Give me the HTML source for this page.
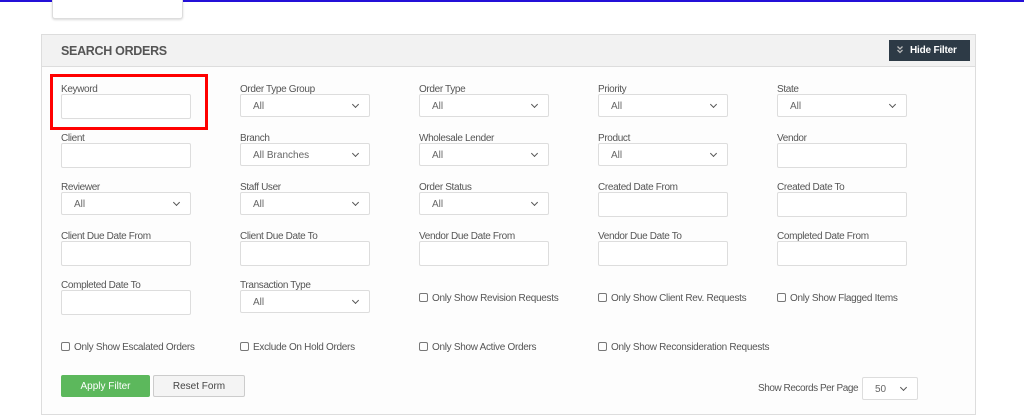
<!DOCTYPE html>
<html><head><style>
*{box-sizing:border-box;margin:0;padding:0}
body{width:1024px;height:416px;background:#fff;font-family:"Liberation Sans",sans-serif;position:relative;overflow:hidden;color:#555}
.a{position:absolute}
.lbl{position:absolute;font-size:10px;color:#555;letter-spacing:-0.35px}
.in{position:absolute;width:130px;height:25px;border:1px solid #ddd;border-radius:2px;background:#fff}
.sel{position:absolute;width:130px;height:23px;border:1px solid #ddd;border-radius:2px;background:#fff;font-size:10px;color:#666;padding:6px 0 0 12px}
.sel:after{content:"";position:absolute;right:11px;top:7px;width:4px;height:4px;border-right:1.5px solid #555;border-bottom:1.5px solid #555;transform:rotate(45deg)}
.cb{position:absolute;font-size:10px;color:#555;letter-spacing:-0.3px}
.cb i{display:inline-block;width:9px;height:9px;border:1px solid #777;border-radius:2px;vertical-align:-1px;margin-right:4px}
</style></head><body>
<div class="a" style="left:0;top:0;width:1024px;height:2px;background:#2410d8"></div>
<div class="a" style="left:52px;top:0;width:131px;height:19px;background:#fff;border:1px solid #ddd;border-top:none;border-radius:0 0 3px 3px;box-shadow:0 1px 2px rgba(0,0,0,.15)"></div>
<div class="a" style="left:41px;top:34px;width:935px;height:381px;border:1px solid #ddd;background:#fdfdfd"></div>
<div class="a" style="left:42px;top:35px;width:933px;height:32px;background:#f2f2f2;border-bottom:1px solid #ddd"></div>
<div class="a" style="left:61px;top:44px;font-size:12.5px;font-weight:bold;color:#555;letter-spacing:-0.3px">SEARCH ORDERS</div>
<div class="a" style="left:889px;top:40px;width:81px;height:21px;background:#2d3a46;color:#fff;font-size:10px;font-weight:bold;padding:5px 0 0 21px;letter-spacing:-0.2px">Hide Filter</div>
<svg class="a" style="left:897px;top:46px" width="6" height="8" viewBox="0 0 6 8"><path d="M0.5 0.5L3 3L5.5 0.5M0.5 4L3 6.5L5.5 4" fill="none" stroke="#bbb" stroke-width="1.3"/></svg>
<div class="a" style="left:50px;top:74px;width:158px;height:56px;border:3px solid #f00"></div>

<div class="lbl" style="left:61px;top:84px">Keyword</div><div class="in" style="left:61px;top:94px"></div>
<div class="lbl" style="left:240px;top:84px">Order Type Group</div><div class="sel" style="left:240px;top:94px">All</div>
<div class="lbl" style="left:419px;top:84px">Order Type</div><div class="sel" style="left:419px;top:94px">All</div>
<div class="lbl" style="left:598px;top:84px">Priority</div><div class="sel" style="left:598px;top:94px">All</div>
<div class="lbl" style="left:777px;top:84px">State</div><div class="sel" style="left:777px;top:94px">All</div>

<div class="lbl" style="left:61px;top:133px">Client</div><div class="in" style="left:61px;top:143px"></div>
<div class="lbl" style="left:240px;top:133px">Branch</div><div class="sel" style="left:240px;top:143px">All Branches</div>
<div class="lbl" style="left:419px;top:133px">Wholesale Lender</div><div class="sel" style="left:419px;top:143px">All</div>
<div class="lbl" style="left:598px;top:133px">Product</div><div class="sel" style="left:598px;top:143px">All</div>
<div class="lbl" style="left:777px;top:133px">Vendor</div><div class="in" style="left:777px;top:143px"></div>

<div class="lbl" style="left:61px;top:182px">Reviewer</div><div class="sel" style="left:61px;top:192px">All</div>
<div class="lbl" style="left:240px;top:182px">Staff User</div><div class="sel" style="left:240px;top:192px">All</div>
<div class="lbl" style="left:419px;top:182px">Order Status</div><div class="sel" style="left:419px;top:192px">All</div>
<div class="lbl" style="left:598px;top:182px">Created Date From</div><div class="in" style="left:598px;top:192px"></div>
<div class="lbl" style="left:777px;top:182px">Created Date To</div><div class="in" style="left:777px;top:192px"></div>

<div class="lbl" style="left:61px;top:231px">Client Due Date From</div><div class="in" style="left:61px;top:241px"></div>
<div class="lbl" style="left:240px;top:231px">Client Due Date To</div><div class="in" style="left:240px;top:241px"></div>
<div class="lbl" style="left:419px;top:231px">Vendor Due Date From</div><div class="in" style="left:419px;top:241px"></div>
<div class="lbl" style="left:598px;top:231px">Vendor Due Date To</div><div class="in" style="left:598px;top:241px"></div>
<div class="lbl" style="left:777px;top:231px">Completed Date From</div><div class="in" style="left:777px;top:241px"></div>

<div class="lbl" style="left:61px;top:280px">Completed Date To</div><div class="in" style="left:61px;top:290px"></div>
<div class="lbl" style="left:240px;top:280px">Transaction Type</div><div class="sel" style="left:240px;top:290px">All</div>
<div class="cb" style="left:419px;top:293px"><i></i>Only Show Revision Requests</div>
<div class="cb" style="left:598px;top:293px"><i></i>Only Show Client Rev. Requests</div>
<div class="cb" style="left:777px;top:293px"><i></i>Only Show Flagged Items</div>

<div class="cb" style="left:61px;top:342px"><i></i>Only Show Escalated Orders</div>
<div class="cb" style="left:240px;top:342px"><i></i>Exclude On Hold Orders</div>
<div class="cb" style="left:419px;top:342px"><i></i>Only Show Active Orders</div>
<div class="cb" style="left:598px;top:342px"><i></i>Only Show Reconsideration Requests</div>

<div class="a" style="left:61px;top:375px;width:89px;height:22px;background:#5cb85c;border-radius:2px;color:#fff;font-size:10px;text-align:center;padding-top:6px">Apply Filter</div>
<div class="a" style="left:153px;top:375px;width:92px;height:22px;background:#f4f4f4;border:1px solid #ccc;border-radius:2px;color:#444;font-size:10px;text-align:center;padding-top:5px">Reset Form</div>
<div class="lbl" style="left:758px;top:383px;letter-spacing:-0.45px">Show Records Per Page</div>
<div class="sel" style="left:862px;top:377px;width:56px;height:23px">50</div>
</body></html>
